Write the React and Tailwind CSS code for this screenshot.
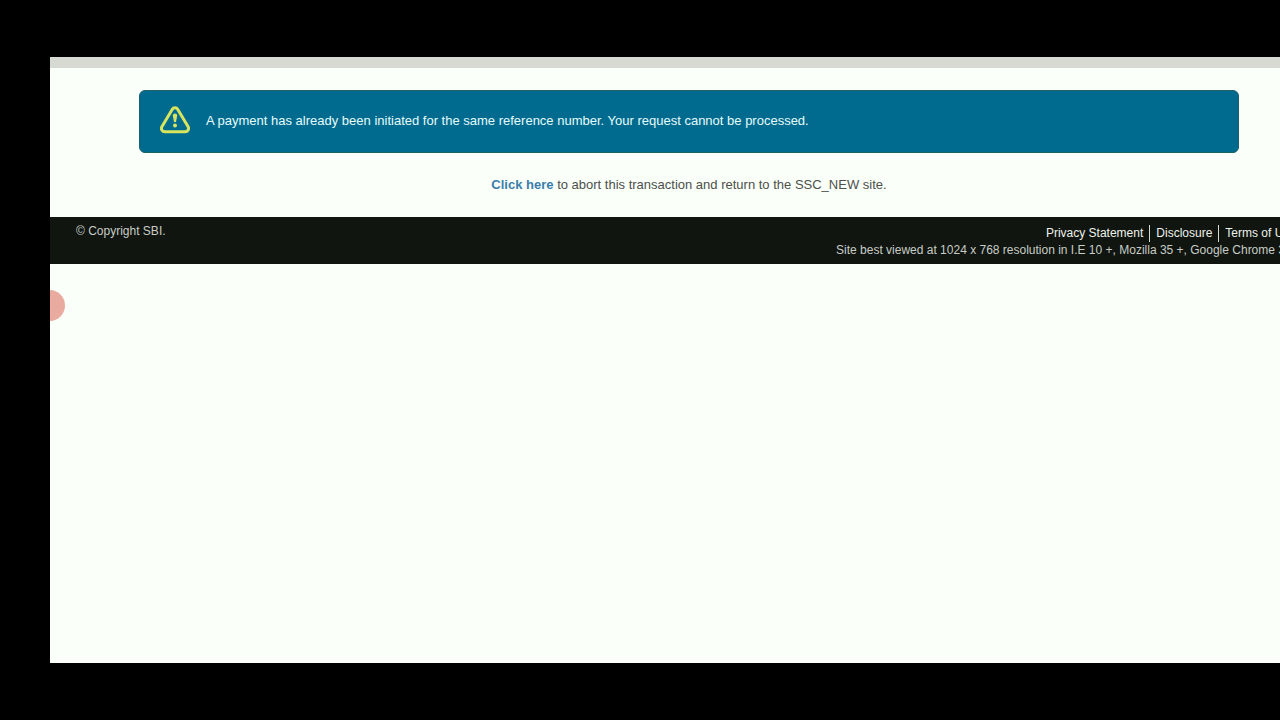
const footerLinks = ['Privacy Statement', 'Disclosure', 'Terms of Use'];

function WarningIcon() {
  return (
    <svg width="30" height="28" viewBox="0 0 30 28" fill="none" aria-hidden="true" className="shrink-0">
      <path
        d="M12.2 3.4 2 20.4C.6 23 2 25.8 5 25.8h20c3 0 4.4-2.8 3-5.4L17.8 3.4c-1.3-2.2-4.3-2.2-5.6 0Z"
        stroke="#d9e45e"
        strokeWidth="3"
        strokeLinejoin="round"
      />
      <path d="M12.8 9.6c0-2.8 4.4-2.8 4.4 0L16 16h-2Z" fill="#d9e45e" />
      <circle cx="15" cy="19.5" r="2" fill="#d9e45e" />
    </svg>
  );
}

function Alert() {
  return (
    <div role="alert" className="mx-[89px] flex h-[63px] items-start gap-4 rounded-md border border-[#1c6068] bg-[#006b8f] px-5 pt-[15px]">
      <WarningIcon />
      <p className="pt-[5px] text-[13px] leading-5 text-[#e6fbfa]">
        A payment has already been initiated for the same reference number. Your request cannot be processed.
      </p>
    </div>
  );
}

function Footer() {
  return (
    <footer className="flex h-[47px] items-start justify-between bg-[#10150f] px-[26px] text-xs leading-[17px] text-[#c8ccc6]">
      <p className="pt-[6px]">© Copyright SBI.</p>
      <div className="flex flex-col items-end pt-2 whitespace-nowrap">
        <ul className="flex text-[#eef2ec]">
          {footerLinks.map((label) => (
            <li key={label} className="border-l border-[#d5d9d3] px-[6px] first:border-l-0">
              <a href="#">{label}</a>
            </li>
          ))}
        </ul>
        <p>Site best viewed at 1024 x 768 resolution in I.E 10 +, Mozilla 35 +, Google Chrome 35 +</p>
      </div>
    </footer>
  );
}

export default function App() {
  return (
    <div className="flex min-h-screen bg-black py-[57px] pl-[50px] font-['Liberation_Sans',Arial,sans-serif]">
      <div className="relative min-w-0 grow overflow-hidden bg-[#fafff9]">
        {/* the page runs past the right edge of the viewport */}
        <div className="-mr-12">
          <div className="h-[11px] bg-[#d6dad3]" />
          <main className="py-[22px]">
            <Alert />
            <p className="pt-[22px] text-center text-[13px] leading-5 text-[#4c504b]">
              <a href="#" className="font-bold text-[#3a7dab]">Click here</a> to abort this transaction and return to the SSC_NEW site.
            </p>
          </main>
          <Footer />
        </div>

        {/* floating recorder bubble, half off screen */}
        <span className="absolute top-[233px] -left-4 size-[31px] rounded-full bg-[#e9aaa0]" />
      </div>
    </div>
  );
}
